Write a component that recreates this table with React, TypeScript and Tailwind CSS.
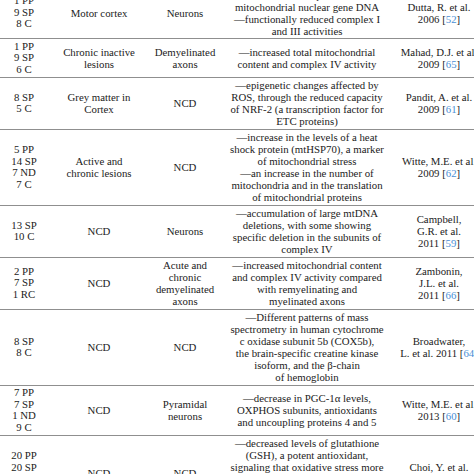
const ROWS: {
  n: string[]
  area: string[]
  cells: string[]
  finding: string[]
  ref: [string[], string, string]
}[] = [
  {
    n: ['1 PP', '9 SP', '8 C'],
    area: ['Motor cortex'],
    cells: ['Neurons'],
    finding: [
      '—decreased expression of',
      'mitochondrial nuclear gene DNA',
      '—functionally reduced complex I',
      'and III activities',
    ],
    ref: [['Dutta, R. et al.'], '2006', '52'],
  },
  {
    n: ['1 PP', '9 SP', '6 C'],
    area: ['Chronic inactive', 'lesions'],
    cells: ['Demyelinated', 'axons'],
    finding: ['—increased total mitochondrial', 'content and complex IV activity'],
    ref: [['Mahad, D.J. et al.'], '2009', '65'],
  },
  {
    n: ['8 SP', '5 C'],
    area: ['Grey matter in', 'Cortex'],
    cells: ['NCD'],
    finding: [
      '—epigenetic changes affected by',
      'ROS, through the reduced capacity',
      'of NRF-2 (a transcription factor for',
      'ETC proteins)',
    ],
    ref: [['Pandit, A. et al.'], '2009', '61'],
  },
  {
    n: ['5 PP', '14 SP', '7 ND', '7 C'],
    area: ['Active and', 'chronic lesions'],
    cells: ['NCD'],
    finding: [
      '—increase in the levels of a heat',
      'shock protein (mtHSP70), a marker',
      'of mitochondrial stress',
      '—an increase in the number of',
      'mitochondria and in the translation',
      'of mitochondrial proteins',
    ],
    ref: [['Witte, M.E. et al.'], '2009', '62'],
  },
  {
    n: ['13 SP', '10 C'],
    area: ['NCD'],
    cells: ['Neurons'],
    finding: [
      '—accumulation of large mtDNA',
      'deletions, with some showing',
      'specific deletion in the subunits of',
      'complex IV',
    ],
    ref: [['Campbell,', 'G.R. et al.'], '2011', '59'],
  },
  {
    n: ['2 PP', '7 SP', '1 RC'],
    area: ['NCD'],
    cells: ['Acute and', 'chronic', 'demyelinated', 'axons'],
    finding: [
      '—increased mitochondrial content',
      'and complex IV activity compared',
      'with remyelinating and',
      'myelinated axons',
    ],
    ref: [['Zambonin,', 'J.L. et al.'], '2011', '66'],
  },
  {
    n: ['8 SP', '8 C'],
    area: ['NCD'],
    cells: ['NCD'],
    finding: [
      '—Different patterns of mass',
      'spectrometry in human cytochrome',
      'c oxidase subunit 5b (COX5b),',
      'the brain-specific creatine kinase',
      'isoform, and the β-chain',
      'of hemoglobin',
    ],
    ref: [['Broadwater,', 'L. et al.'], '2011', '64'],
  },
  {
    n: ['7 PP', '7 SP', '1 ND', '9 C'],
    area: ['NCD'],
    cells: ['Pyramidal', 'neurons'],
    finding: [
      '—decrease in PGC-1α levels,',
      'OXPHOS subunits, antioxidants',
      'and uncoupling proteins 4 and 5',
    ],
    ref: [['Witte, M.E. et al.'], '2013', '60'],
  },
  {
    n: ['20 PP', '20 SP', '20 RR', '20 C'],
    area: ['NCD'],
    cells: ['NCD'],
    finding: [
      '—decreased levels of glutathione',
      '(GSH), a potent antioxidant,',
      'signaling that oxidative stress more',
      'likely plays a role in progressive',
      'than in relapsing–remitting',
      'multiple sclerosis',
    ],
    ref: [['Choi, Y. et al.'], '2018', '67'],
  },
]

function Lines({ lines }: { lines: string[] }) {
  return (
    <>
      {lines.map((l, i) => (
        <div key={i} className="whitespace-nowrap">
          {l}
        </div>
      ))}
    </>
  )
}

function Ref({ ref: [names, year, num] }: { ref: [string[], string, string] }) {
  // Broadwater keeps the year on the "et al." line
  const inline = names[0] === 'Broadwater,'
  const cite = (
    <>
      {year} [<span className="text-[#4a8fd6]">{num}</span>]
    </>
  )
  if (inline) {
    return (
      <>
        <div className="whitespace-nowrap">{names[0]}</div>
        <div className="whitespace-nowrap">
          {names[1]} {cite}
        </div>
      </>
    )
  }
  return (
    <>
      <Lines lines={names} />
      <div className="whitespace-nowrap">{cite}</div>
    </>
  )
}

export default function App() {
  return (
    <div className="h-[474px] w-[474px] overflow-hidden bg-white">
      <table
        className="-mt-[13px] w-[484px] table-fixed border-collapse text-center text-[10.8px] leading-[12px] text-[#222]"
        style={{ fontFamily: '"Liberation Serif", "DejaVu Serif", serif' }}
      >
        <colgroup>
          <col className="w-[48px]" />
          <col className="w-[102px]" />
          <col className="w-[70px]" />
          <col className="w-[174px]" />
          <col className="w-[90px]" />
        </colgroup>
        <tbody>
          {ROWS.map((r, i) => (
            <tr key={i} className="border-b-[1.5px] border-[#8f8f8f]">
              <td className="py-[1.5px] align-middle leading-[11.5px]">
                <Lines lines={r.n} />
              </td>
              <td className="py-[1.5px] align-middle">
                <Lines lines={r.area} />
              </td>
              <td className="py-[1.5px] align-middle">
                <Lines lines={r.cells} />
              </td>
              <td className="py-[1.5px] align-middle">
                <Lines lines={r.finding} />
              </td>
              <td className="py-[1.5px] align-middle">
                <Ref ref={r.ref} />
              </td>
            </tr>
          ))}
        </tbody>
      </table>
    </div>
  )
}
